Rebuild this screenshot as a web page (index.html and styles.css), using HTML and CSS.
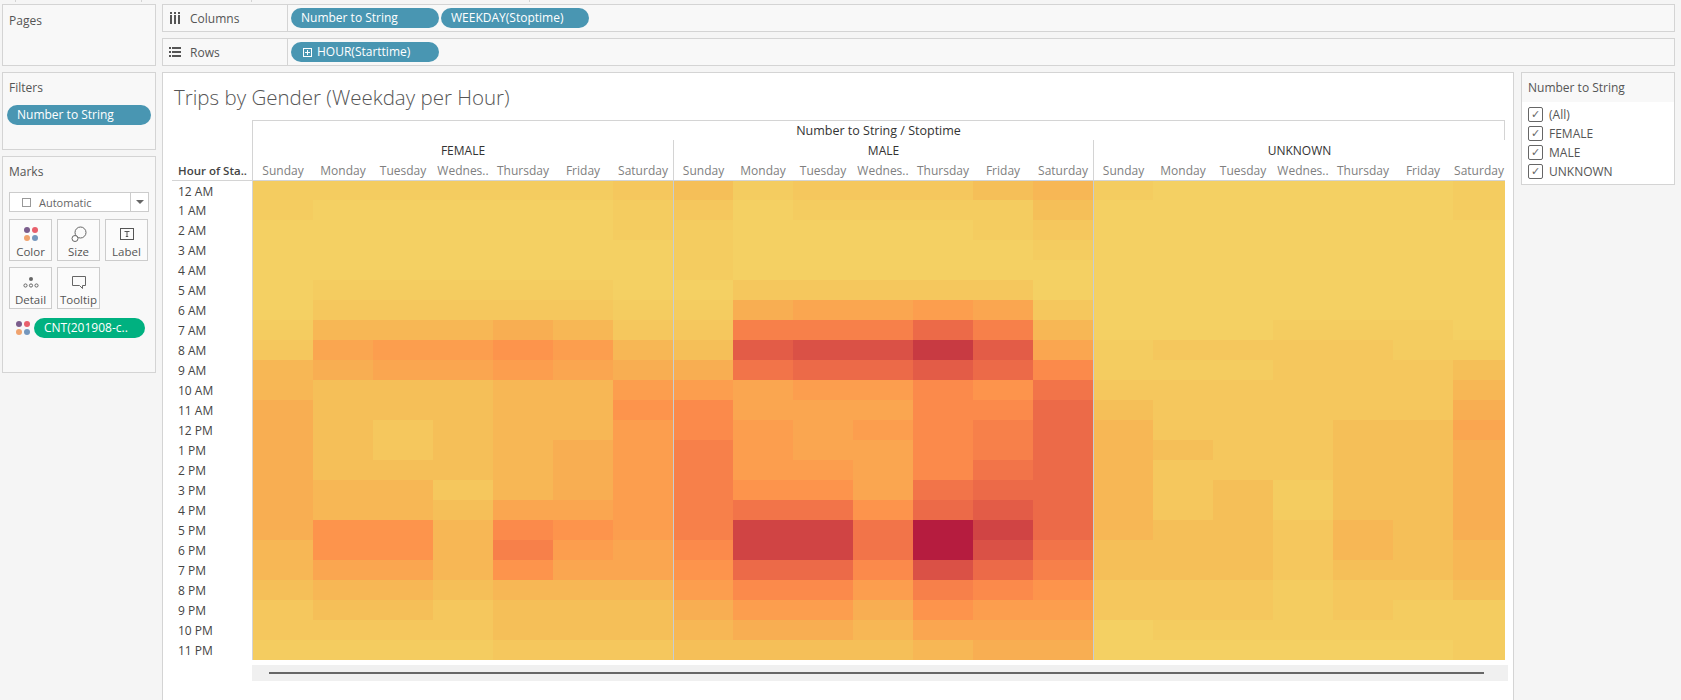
FILE: index.html
```html
<!DOCTYPE html>
<html>
<head>
    <meta charset="UTF-8">
    <meta name="viewport" content="width=device-width, initial-scale=1.0">
    <title>Trips by Gender</title>
    <link rel="stylesheet" href="styles.css">
</head>
<body>
    <div class="tabs"><span class="t1"></span><span class="t2"></span><span class="t3"></span><span class="t4"></span></div>
    <div class="workspace">
        <div class="side">
            <div class="card pages"><div class="card-title">Pages</div></div>
            <div class="card filters">
                <div class="card-title">Filters</div>
                <div class="pill pill-filter">Number to String</div>
            </div>
            <div class="card marks">
                <div class="card-title">Marks</div>
                <div class="mark-type">
                    <span class="mark-check"></span>
                    <span class="mark-name">Automatic</span>
                    <span class="mark-arrow"></span>
                </div>
                <div class="mark-buttons">
                    <div class="mark-btn">
                        <svg width="16" height="16" viewBox="0 0 16 16"><circle cx="4" cy="4" r="3" fill="#7b5d8c"/><circle cx="12" cy="4" r="3" fill="#e8606c"/><circle cx="4" cy="12" r="3" fill="#f0a36e"/><circle cx="12" cy="12" r="3" fill="#7597bd"/></svg>
                        <span>Color</span>
                    </div>
                    <div class="mark-btn">
                        <svg width="16" height="16" viewBox="0 0 16 16" fill="none" stroke="#666"><circle cx="9.5" cy="6.5" r="5.5"/><circle cx="4" cy="12.5" r="3" fill="#fff"/></svg>
                        <span>Size</span>
                    </div>
                    <div class="mark-btn">
                        <svg width="16" height="16" viewBox="0 0 16 16" fill="none" stroke="#555"><rect x="1.5" y="2.5" width="13" height="11"/><path d="M5.5 5.5h5M8 5.5v5M6.8 10.5h2.4"/></svg>
                        <span>Label</span>
                    </div>
                    <div class="mark-btn">
                        <svg width="16" height="16" viewBox="0 0 16 16" fill="none" stroke="#666"><circle cx="8" cy="5" r="2" fill="#666" stroke="none"/><circle cx="2.5" cy="11.5" r="1.6"/><circle cx="8" cy="11.5" r="1.6"/><circle cx="13.5" cy="11.5" r="1.6"/></svg>
                        <span>Detail</span>
                    </div>
                    <div class="mark-btn">
                        <svg width="16" height="16" viewBox="0 0 16 16" fill="none" stroke="#666"><path d="M1.5 2.5h13v9h-3v3l-3-3h-7z"/></svg>
                        <span>Tooltip</span>
                    </div>
                </div>
                <div class="mark-field">
                    <svg width="16" height="16" viewBox="0 0 16 16"><circle cx="4" cy="4" r="3" fill="#7b5d8c"/><circle cx="12" cy="4" r="3" fill="#e8606c"/><circle cx="4" cy="12" r="3" fill="#f0a36e"/><circle cx="12" cy="12" r="3" fill="#7597bd"/></svg>
                    <div class="pill pill-green">CNT(201908-c..</div>
                </div>
            </div>
        </div>

        <div class="center">
            <div class="shelf">
                <div class="shelf-label">
                    <svg width="12" height="14" viewBox="0 0 12 14" fill="#555"><path d="M1 4h2v9H1zM5 4h2v9H5zM9 4h2v9H9zM1 1h2v2H1zM5 1h2v2H5zM9 1h2v2H9z"/></svg>
                    <span>Columns</span>
                </div>
                <div class="pill">Number to String</div>
                <div class="pill">WEEKDAY(Stoptime)</div>
            </div>
            <div class="shelf">
                <div class="shelf-label">
                    <svg width="12" height="14" viewBox="0 0 12 14" fill="#555"><path d="M0 2h2v2H0zM3 2h10v2H3zM0 6h2v2H0zM3 6h10v2H3zM0 10h2v2H0zM3 10h10v2H3z"/></svg>
                    <span>Rows</span>
                </div>
                <div class="pill pill-plus">
                    <svg width="9" height="9" viewBox="0 0 9 9" fill="none" stroke="#fff"><rect x="0.5" y="0.5" width="8" height="8"/><path d="M2 4.5h5M4.5 2v5"/></svg>
                    <span>HOUR(Starttime)</span>
                </div>
            </div>
            <div class="content">
                <div class="view">
                    <h1 class="view-title">Trips by Gender (Weekday per Hour)</h1>
                    <div class="table-head">
                        <div class="head-top">Number to String / Stoptime</div>
                        <div class="head-gender">FEMALE</div>
                        <div class="head-gender group-start">MALE</div>
                        <div class="head-gender group-start">UNKNOWN</div>
                        <div class="head-hour">Hour of Sta..</div>
                        <div class="head-day">Sunday</div><div class="head-day">Monday</div><div class="head-day">Tuesday</div><div class="head-day">Wednes..</div><div class="head-day">Thursday</div><div class="head-day">Friday</div><div class="head-day">Saturday</div>
                        <div class="head-day group-start">Sunday</div><div class="head-day">Monday</div><div class="head-day">Tuesday</div><div class="head-day">Wednes..</div><div class="head-day">Thursday</div><div class="head-day">Friday</div><div class="head-day">Saturday</div>
                        <div class="head-day group-start">Sunday</div><div class="head-day">Monday</div><div class="head-day">Tuesday</div><div class="head-day">Wednes..</div><div class="head-day">Thursday</div><div class="head-day">Friday</div><div class="head-day">Saturday</div>
                    </div>
                    <div class="heat" id="heat"></div>
                    <div class="scrollbar"><div class="scroll-thumb"></div></div>
                </div>
                <div class="legend">
                    <div class="legend-title">Number to String</div>
                    <div class="legend-items">
                        <label class="legend-item"><span class="check">&#10003;</span>(All)</label>
                        <label class="legend-item"><span class="check">&#10003;</span>FEMALE</label>
                        <label class="legend-item"><span class="check">&#10003;</span>MALE</label>
                        <label class="legend-item"><span class="check">&#10003;</span>UNKNOWN</label>
                    </div>
                </div>
            </div>
        </div>
    </div>
    <script src="script.js"></script>
</body>
</html>
```

FILE: styles.css
```css
* {
    box-sizing: border-box;
}

body {
    font-family: "Open Sans", "Liberation Sans", sans-serif;
    font-size: 12px;
    color: #555;
    margin: 0;
    height: 700px;
    overflow: hidden;
    background-color: #f5f5f5;
}

.tabs {
    display: flex;
    height: 4px;
}

.tabs span {
    height: 2px;
    border-right: 1px solid #d4d4d4;
}

.t1 { width: 16px; }
.t2 { width: 126px; }
.t3 { width: 110px; }
.t4 { width: 278px; }

.workspace {
    display: flex;
    gap: 6px;
    padding: 0 6px 0 2px;
}

.side {
    width: 154px;
    display: flex;
    flex-direction: column;
    gap: 6px;
}

.card {
    background: #f8f8f8;
    border: 1px solid #d4d4d4;
    padding: 5px 6px 6px;
}

.card-title {
    line-height: 20px;
    color: #555;
}

.pages { height: 62px; padding-top: 6px; }

.filters { height: 78px; }

.marks { height: 217px; }

.pill {
    width: 148px;
    height: 20px;
    line-height: 20px;
    padding-left: 10px;
    border-radius: 10px;
    background-color: #4996b2;
    color: #fff;
    white-space: nowrap;
}

.pill-filter {
    width: 144px;
    margin: 7px 0 0 -2px;
}

.mark-type {
    display: flex;
    align-items: center;
    height: 20px;
    margin-top: 10px;
    background: #fff;
    border: 1px solid #ccc;
}

.mark-check {
    width: 9px;
    height: 9px;
    margin-left: 12px;
    border: 1px solid #999;
}

.mark-name {
    margin-left: 8px;
    flex: 1;
    font-size: 11px;
    color: #666;
}

.mark-arrow {
    width: 18px;
    height: 18px;
    border-left: 1px solid #ccc;
    position: relative;
}

.mark-arrow::after {
    content: "";
    position: absolute;
    left: 5px;
    top: 7px;
    border-left: 4px solid transparent;
    border-right: 4px solid transparent;
    border-top: 4px solid #666;
}

.mark-buttons {
    display: grid;
    grid-template-columns: repeat(3, 43px);
    grid-auto-rows: 42px;
    gap: 6px 5px;
    margin-top: 7px;
}

.mark-btn {
    display: flex;
    flex-direction: column;
    align-items: center;
    gap: 3px;
    padding-top: 6px;
    border: 1px solid #ccc;
    background: #fbfbfb;
    font-size: 11.5px;
    line-height: 14px;
    color: #555;
}

.mark-field {
    display: flex;
    align-items: center;
    gap: 3px;
    margin: 9px 0 0 6px;
}

.pill-green {
    width: 111px;
    background-color: #00b180;
}

.center {
    flex: 1;
    display: flex;
    flex-direction: column;
    gap: 6px;
    min-width: 0;
}

.shelf {
    display: flex;
    align-items: center;
    gap: 2px;
    height: 28px;
    background: #f8f8f8;
    border: 1px solid #d4d4d4;
}

.shelf-label {
    display: flex;
    align-items: center;
    gap: 9px;
    width: 125px;
    height: 100%;
    padding-left: 6px;
    margin-right: 1px;
    border-right: 1px solid #d4d4d4;
}

.pill-plus {
    display: flex;
    align-items: center;
    gap: 5px;
    padding-left: 12px;
}

.content {
    display: flex;
    gap: 7px;
    align-items: flex-start;
}

.view {
    width: 1352px;
    height: 640px;
    padding-left: 9px;
    background: #fff;
    border: 1px solid #d4d4d4;
    border-bottom: none;
}

.view-title {
    margin: 0;
    height: 47px;
    padding: 11px 0 0 2px;
    font-size: 20.5px;
    line-height: 27px;
    font-weight: 300;
    color: #555;
}

.table-head {
    display: grid;
    grid-template-columns: 81px repeat(20, 60px) 52px;
    grid-template-rows: 20px 20px 20px;
    width: 1333px;
}

.head-top {
    grid-column: 2 / -1;
    text-align: center;
    line-height: 20px;
    font-size: 12.5px;
    color: #333;
    border-top: 1px solid #d4d4d4;
    border-right: 1px solid #d4d4d4;
}

.head-gender {
    grid-column: span 7;
    grid-row: 2;
    text-align: center;
    line-height: 22px;
    font-size: 12px;
    color: #333;
}

.head-gender:nth-child(2) { grid-column: 2 / span 7; }

.head-hour {
    grid-row: 1 / span 3;
    grid-column: 1;
    padding: 41px 0 0 6px;
    line-height: 20px;
    font-size: 11.5px;
    font-weight: 600;
    color: #444;
    white-space: nowrap;
    border-right: 1px solid #d4d4d4;
}

.head-day {
    grid-row: 3;
    text-align: center;
    line-height: 22px;
    font-size: 12px;
    color: #808080;
    white-space: nowrap;
}

.group-start {
    border-left: 1px solid #d4d4d4;
}

.heat {
    display: grid;
    grid-template-columns: 81px repeat(20, 60px) 52px;
    grid-template-rows: 19px repeat(23, 20px);
    width: 1333px;
    border-top: 1px solid #d4d4d4;
    border-right: 1px solid #d4d4d4;
}

.hour {
    padding-left: 6px;
    line-height: 21px;
    color: #444;
    white-space: nowrap;
    border-right: 1px solid #d4d4d4;
}

.cell.group-start {
    border-left: 1px solid #c6cdd4;
}

.scrollbar {
    display: flex;
    align-items: center;
    height: 16px;
    width: 1256px;
    margin: 5px 0 0 80px;
    padding-left: 17px;
    background: #f0f0f0;
}

.scroll-thumb {
    width: 1215px;
    height: 2px;
    background: #666;
}

.legend {
    width: 154px;
    height: 113px;
    background: #fff;
    border: 1px solid #d4d4d4;
}

.legend-title {
    height: 29px;
    line-height: 30px;
    padding-left: 6px;
    background: #f8f8f8;
}

.legend-items {
    padding: 3px 0 0 6px;
}

.legend-item {
    display: flex;
    align-items: center;
    gap: 6px;
    height: 19px;
}

.check {
    width: 15px;
    height: 15px;
    border: 1px solid #666;
    border-radius: 2px;
    text-align: center;
    line-height: 13px;
    font-family: "DejaVu Sans", sans-serif;
    font-size: 11px;
    font-weight: bold;
    color: #666;
}
```

FILE: script.js
```js
// colour steps, light to dark
const colors = {
    a: '#f4d063', b: '#f4cc60', c: '#f5c75d', d: '#f5bf58', e: '#f7b755', f: '#f8ae52',
    g: '#faa650', h: '#fc9e4e', i: '#fd944c', j: '#fb8a4b', k: '#f7804a', l: '#f27449',
    m: '#ec6a48', n: '#e35c47', o: '#da5146', p: '#d04444', q: '#c83a42', r: '#b61c3f'
};

const hours = ['12 AM', '1 AM', '2 AM', '3 AM', '4 AM', '5 AM', '6 AM', '7 AM', '8 AM', '9 AM', '10 AM', '11 AM',
    '12 PM', '1 PM', '2 PM', '3 PM', '4 PM', '5 PM', '6 PM', '7 PM', '8 PM', '9 PM', '10 PM', '11 PM'];

// one string per hour: female, male, unknown
const rows = [
    'bbbbbbc dbcccde baaaaab',
    'baaaaab cabbbbd aaaaaab',
    'aaaaaab baaaabc aaaaaaa',
    'aaaaaaa baaaaab aaaaaaa',
    'aaaaaaa baaaaaa aaaaaaa',
    'abbbbba accccca aaaaaaa',
    'acccccb bfgghgc aaaaaaa',
    'beeefec ckkkmke aaabbba',
    'cghhihe dnooqng bccccbb',
    'efgghgf flmmnmj bbbcccd',
    'edddeeh hghhjil cccccce',
    'fdddeei jgggjjm dcccccf',
    'fdcdeeh jhghjkm ecccddg',
    'fdcdefh khggjkm edccddf',
    'fdddefh khhgjlm ecccddf',
    'feecefh kiiglmm ecdbddf',
    'feedggh kllimnm ecdbddf',
    'fiiejih kpplrpm eddcedf',
    'eiiekhg jpplrol dddcede',
    'eggeigg immjomk dddcdde',
    'deedeee hjjhkji cccbccd',
    'cddcddd fhhfihh cccbcbb',
    'ccccddd effeggg abbbbbb',
    'bbbbccc ddddeff aaaaaab'
];

const heat = document.getElementById('heat');

rows.forEach((row, r) => {
    const hour = document.createElement('div');
    hour.className = 'hour';
    hour.textContent = hours[r];
    heat.appendChild(hour);

    row.replace(/ /g, '').split('').forEach((step, c) => {
        const cell = document.createElement('div');
        cell.className = c > 0 && c % 7 === 0 ? 'cell group-start' : 'cell';
        cell.style.backgroundColor = colors[step];
        heat.appendChild(cell);
    });
});
```
